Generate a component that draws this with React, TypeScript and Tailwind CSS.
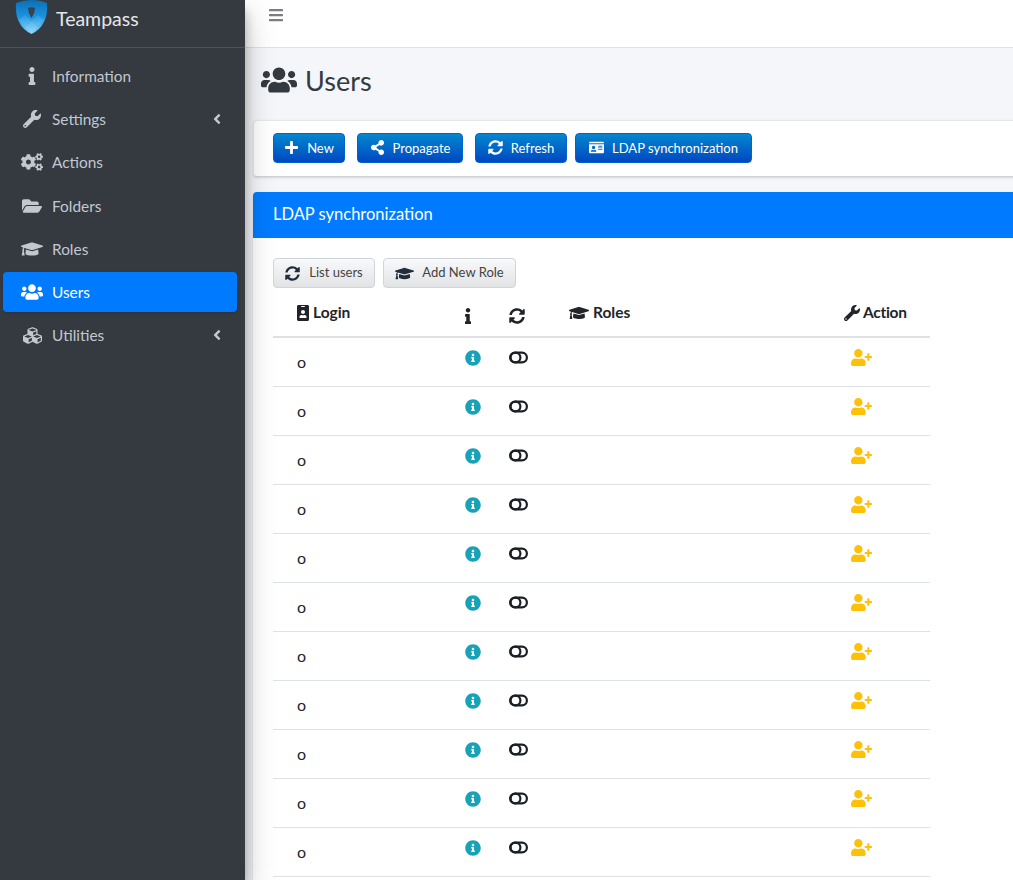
import React from 'react';
import {
  FaInfo, FaWrench, FaCogs, FaFolderOpen, FaGraduationCap, FaUsers, FaCubes, FaAngleLeft, FaBars,
  FaPlus, FaShareAlt, FaSyncAlt, FaIdCard, FaIdBadge, FaInfoCircle, FaUserPlus,
} from 'react-icons/fa';

const font = { fontFamily: 'Lato' };

const menu = [
  { label: 'Information', icon: FaInfo, size: 'text-[18px]' },
  { label: 'Settings', icon: FaWrench, arrow: true, size: 'text-[18px]' },
  { label: 'Actions', icon: FaCogs, size: 'text-[22px]' },
  { label: 'Folders', icon: FaFolderOpen, size: 'text-[20px]' },
  { label: 'Roles', icon: FaGraduationCap, size: 'text-[22px]' },
  { label: 'Users', icon: FaUsers, active: true, size: 'text-[22px]' },
  { label: 'Utilities', icon: FaCubes, arrow: true, size: 'text-[19px]' },
];

const actions = [
  { label: 'New', icon: FaPlus, w: 'w-[72px]' },
  { label: 'Propagate', icon: FaShareAlt, w: 'w-[106px]' },
  { label: 'Refresh', icon: FaSyncAlt, w: 'w-[92px]' },
  { label: 'LDAP synchronization', icon: FaIdCard, w: 'w-[177px] -ml-1' },
];

const ToggleIcon = () => (
  <svg width="19" height="13" viewBox="0 0 19 13" fill="none" stroke="#1b2027" strokeWidth="2.2">
    <rect x="1.100" y="1.600" width="16.800" height="9.800" rx="4.900" />
    <circle cx="6.500" cy="6.500" r="4.900" />
  </svg>
);

const Logo = () => (
  <svg width="34" height="35" viewBox="0 0 34 35">
    <defs>
      <linearGradient id="shield" x1="0" y1="0" x2="0" y2="1">
        <stop offset="0" stopColor="#0b6fb5" />
        <stop offset="0.5" stopColor="#1b94e2" />
        <stop offset="1" stopColor="#86d6fa" />
      </linearGradient>
    </defs>
    <path d="M1 3 Q9 0 16.500 0 Q25 0 32 3 Q33 14 29 22 Q25 30 16.500 34 Q8 30 4 22 Q0 14 1 3Z" fill="url(#shield)" />
    <path d="M4 20 L10 15 L16.500 21 L23 15 L29 20 L23 26 L16.500 21 L10 26Z" fill="#ffffff" fillOpacity="0.1" />
    <path d="M16.500 21 L23 27 L16.500 33 L10 27Z" fill="#ffffff" fillOpacity="0.16" />
    <path d="M13 8 Q16.500 6.500 20 8 Q20 13 16.500 18 Q13 13 13 8Z" fill="#39424c" />
  </svg>
);

function Row() {
  return (
    <tr className="h-[49px] border-b border-[#dee2e6]">
      <td className="pl-6 pt-[1px] text-[16px] text-[#212529]">o</td>
      <td className="pb-[8px]"><FaInfoCircle className="text-[16px] text-[#17a2b8]" /></td>
      <td className="pb-[8px]"><ToggleIcon /></td>
      <td />
      <td className="pb-[8px] pl-[10px]"><FaUserPlus className="text-[21px] text-[#ffc107]" /></td>
    </tr>
  );
}

export default function App() {
  return (
    <div className="flex h-[880px] w-[1013px] overflow-hidden bg-[#f4f6f9]" style={font}>
      <aside className="z-10 h-full w-[245px] shrink-0 bg-[#343a40] shadow-[0_14px_28px_rgba(0,0,0,0.25),0_10px_10px_rgba(0,0,0,0.22)]">
        <div className="flex h-[48px] items-start gap-[7px] border-b border-[#4b545c] pl-[15px]">
          <Logo />
          <span className="mt-[7px] text-[19.500px] leading-6 text-[#e4e6e8]">Teampass</span>
        </div>
        <nav className="mt-[8px] flex flex-col gap-[3.200px] pl-[3px] pr-2">
          {menu.map(item => (
            <div
              key={item.label}
              className={`flex h-[40px] items-center rounded pr-3 text-[15.400px] ${item.active ? 'bg-[#007bff] text-white shadow' : 'text-[#c2c7d0]'}`}
            >
              <span className="flex w-[49px] justify-center pl-[9px]">
                <item.icon className={item.size} />
              </span>
              <span className="flex-1 pt-[1px]">{item.label}</span>
              {item.arrow && <FaAngleLeft className="text-[16px]" />}
            </div>
          ))}
        </nav>
      </aside>

      <main className="min-w-0 flex-1">
        <header className="flex h-[48px] border-b border-[#dee2e6] bg-white pl-[23px] pt-[7px] text-[#7b7f84]">
          <FaBars className="text-[16px]" />
        </header>

        <div className="flex h-[72px] items-center gap-[8px] pb-2 pl-[16px] text-[#343a40]">
          <FaUsers className="text-[36px]" />
          <h1 className="text-[27px] font-normal leading-none">Users</h1>
        </div>

        <section className="ml-2 flex h-[57px] w-[800px] items-center gap-3 rounded border border-[#e6e8ea] border-b-[#cfd2d5] bg-white pb-[2px] pl-[19px] shadow-sm">
          {actions.map(action => (
            <button
              key={action.label}
              className={`flex h-[30px] items-center justify-center gap-[8px] rounded border border-[#0062cc] bg-gradient-to-b from-[#0a86cf] to-[#0047c0] text-[13px] text-white ${action.w}`}
            >
              <action.icon className="shrink-0 text-[15px]" />
              <span className="pt-[2px]">{action.label}</span>
            </button>
          ))}
        </section>

        <section className="ml-2 mt-[15px] h-[700px] w-[800px] rounded-t bg-white shadow-sm">
          <div className="flex h-[46px] items-center rounded-t bg-[#007bff] pb-[1px] pl-5 text-[16.500px] text-white">
            LDAP synchronization
          </div>

          <div className="px-5 pt-5">
            <div className="flex gap-2">
              <button className="flex h-[30px] w-[102px] items-center justify-center gap-[9px] rounded border border-[#ced4da] bg-gradient-to-b from-[#f8f9fa] to-[#e2e3e5] text-[13px] text-[#444]">
                <FaSyncAlt className="text-[15px] text-[#1f2d3d]" />List users
              </button>
              <button className="flex h-[30px] w-[133px] items-center justify-center gap-2 rounded border border-[#ced4da] bg-gradient-to-b from-[#f8f9fa] to-[#e2e3e5] text-[13px] text-[#444]">
                <FaGraduationCap className="text-[19px] text-[#1f2d3d]" />Add New Role
              </button>
            </div>

            <table className="w-[657px] table-fixed border-collapse">
              <colgroup>
                <col className="w-[192px]" />
                <col className="w-[44px]" />
                <col className="w-[60px]" />
                <col className="w-[272px]" />
                <col />
              </colgroup>
              <thead>
                <tr className="h-[49px] border-b-2 border-[#dee2e6] text-left text-[15.500px] font-bold text-[#212529]">
                  <th className="pl-[22px] pt-[1px] font-bold">
                    <span className="flex items-center gap-[2px]"><FaIdBadge className="text-[16px]" />Login</span>
                  </th>
                  <th className="pt-[7px] font-bold"><FaInfo className="-ml-[5px] text-[16px]" /></th>
                  <th className="pt-[7px] font-bold"><FaSyncAlt className="text-[16px]" /></th>
                  <th className="pt-[1px] font-bold">
                    <span className="flex items-center gap-[4px]"><FaGraduationCap className="text-[20px]" />Roles</span>
                  </th>
                  <th className="pl-[3px] pt-[1px] font-bold">
                    <span className="flex items-center gap-[3px] tracking-[-0.3px]"><FaWrench className="text-[16px]" />Action</span>
                  </th>
                </tr>
              </thead>
              <tbody>
                {Array.from({ length: 11 }, (_, i) => <Row key={i} />)}
              </tbody>
            </table>
          </div>
        </section>
      </main>
    </div>
  );
}
